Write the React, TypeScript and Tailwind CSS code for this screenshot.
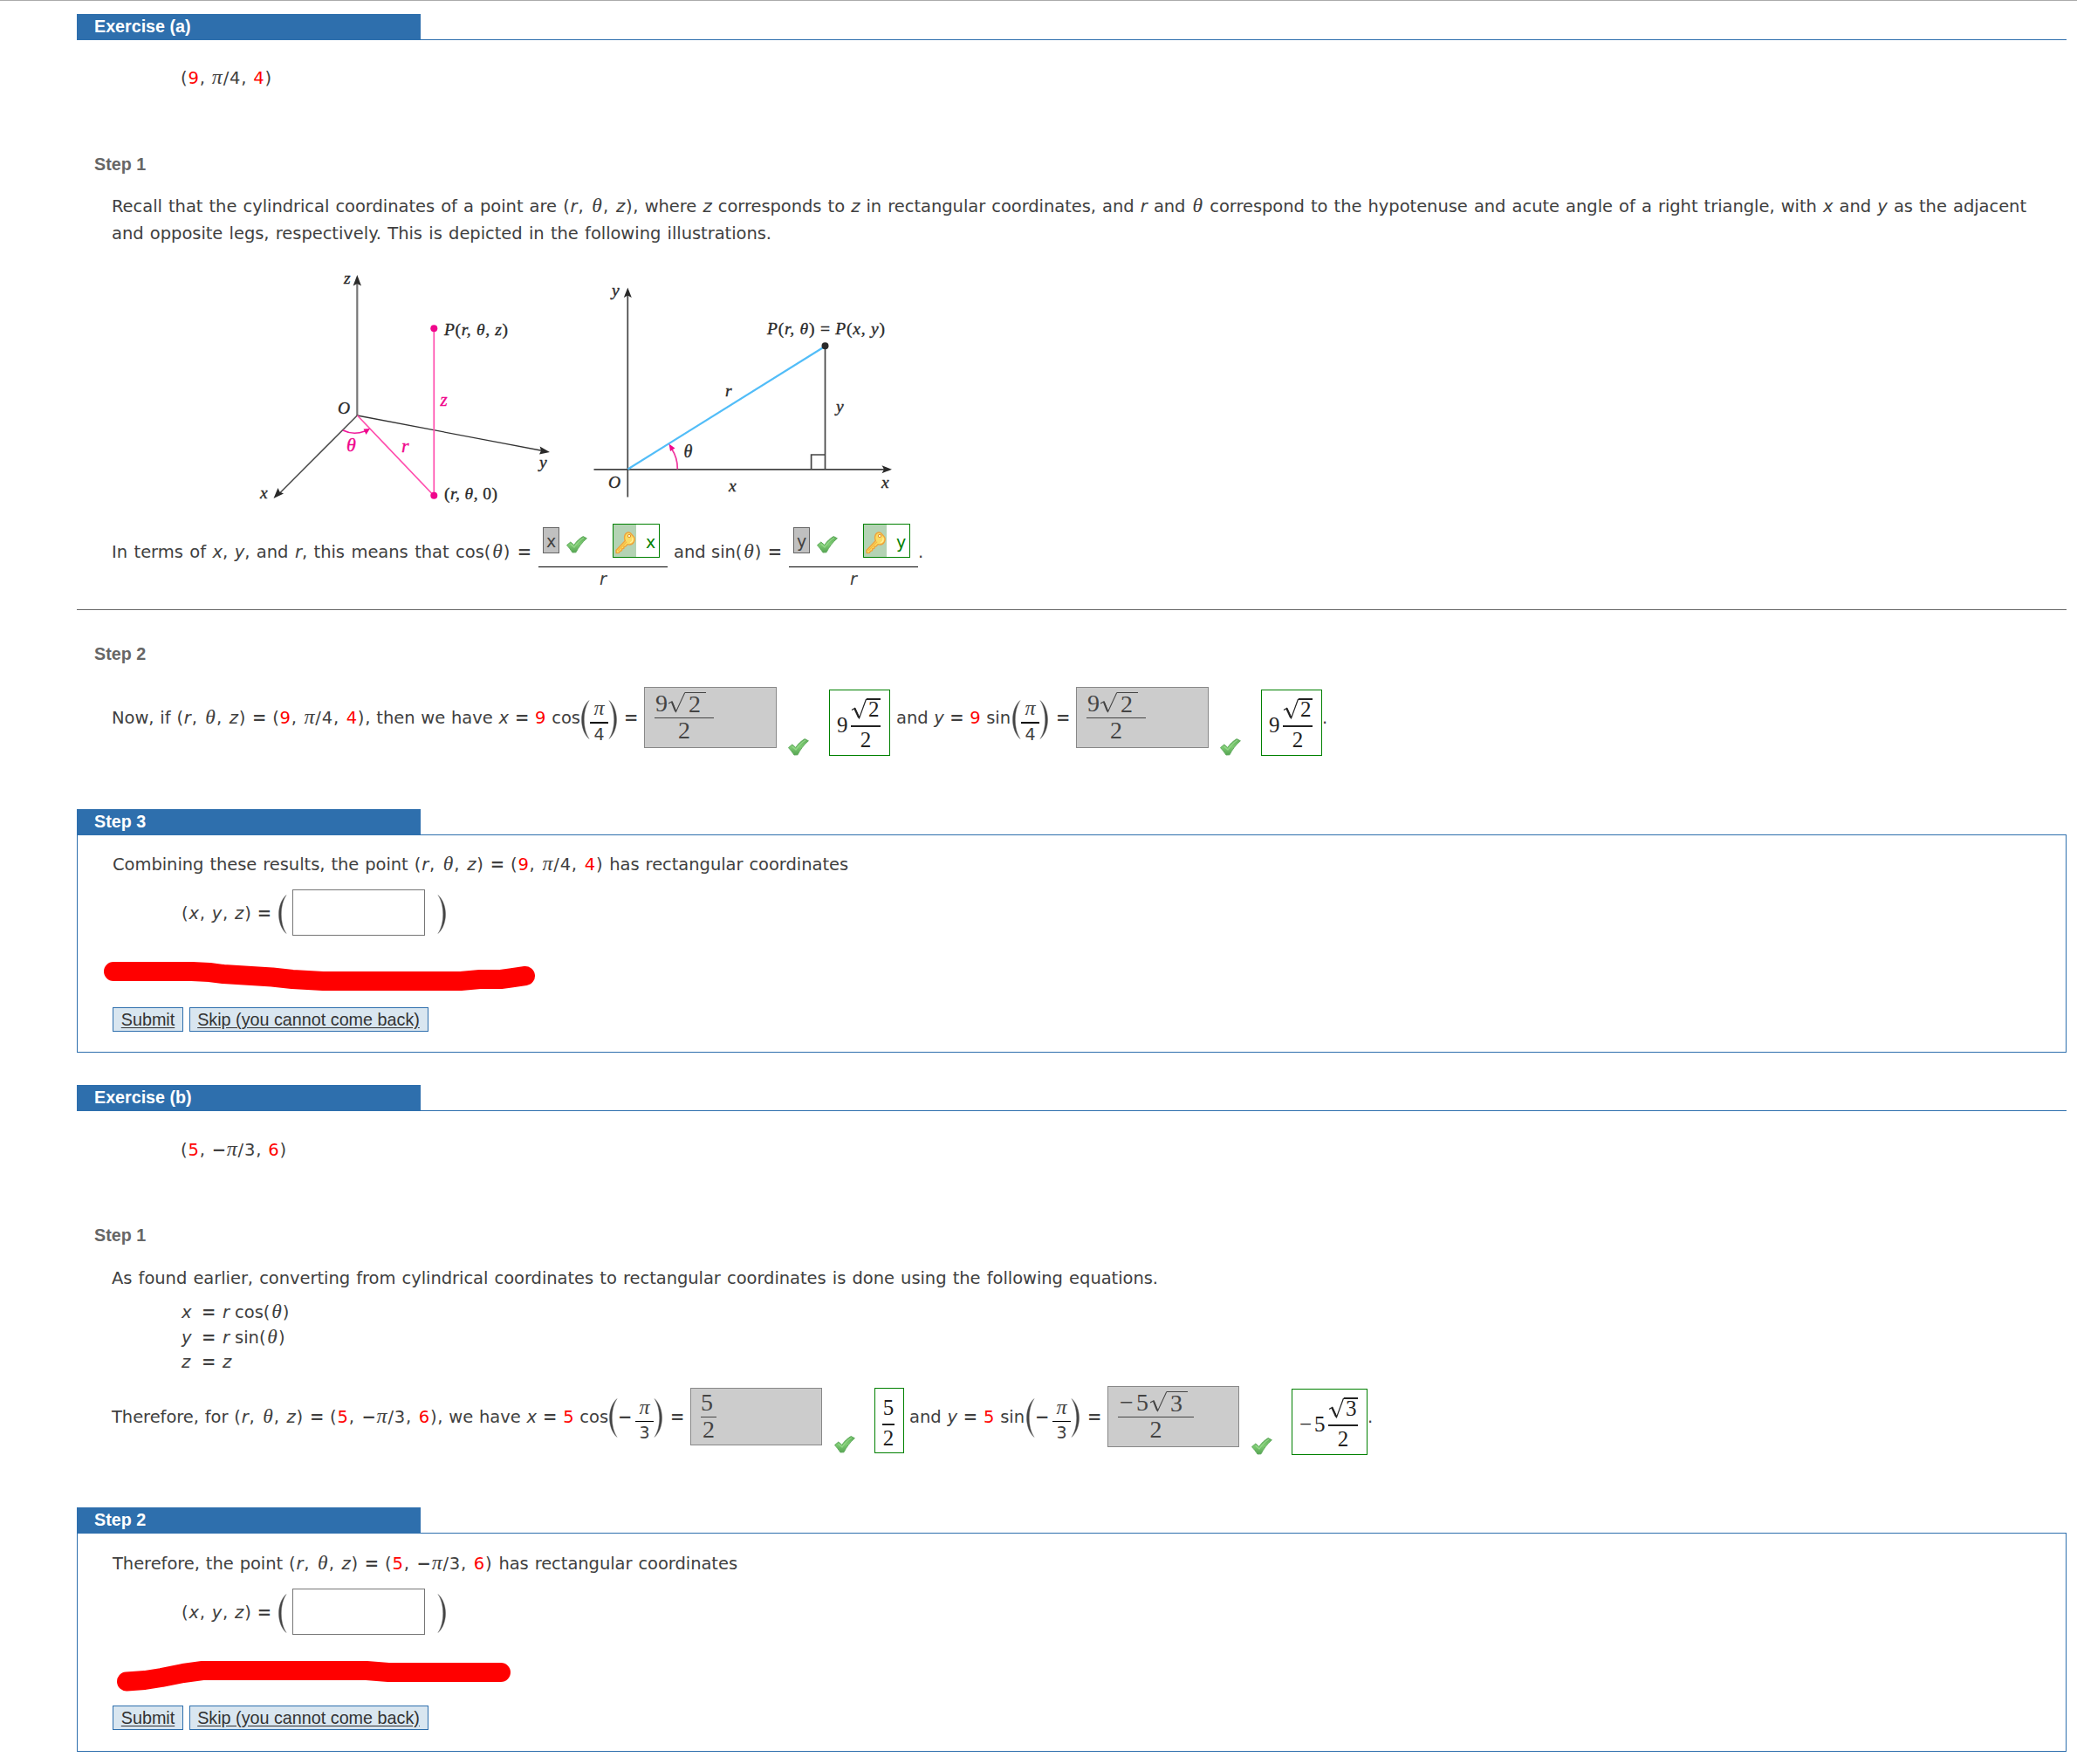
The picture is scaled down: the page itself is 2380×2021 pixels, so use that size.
import React from "react";

type Kids = { children?: React.ReactNode; className?: string };

const Red = ({ children }: Kids) => <span className="text-[#ff0000]">{children}</span>;
const I = ({ children }: Kids) => <i>{children}</i>;
const Eq = () => <b>=</b>;
const Minus = () => <b>−</b>;
const Theta = () => (
  <span className="px-px font-['Liberation_Serif',serif] text-[23.5px] leading-none italic tracking-normal">θ</span>
);
const Pi = () => (
  <span className="font-['Liberation_Serif',serif] text-[24px] leading-none italic">π</span>
);
const Wide = ({ children }: Kids) => <span className="tracking-[0.8px]">{children}</span>;
const Cylindrical = () => (
  <Wide>
    (<I>r</I>, <Theta />, <I>z</I>)
  </Wide>
);
const PointA = () => (
  <Wide>
    (<Red>9</Red>, <Pi />/4, <Red>4</Red>)
  </Wide>
);
const PointB = () => (
  <Wide>
    (<Red>5</Red>, <Minus /><Pi />/3, <Red>6</Red>)
  </Wide>
);

/** One run of body text stretched to an exact measure. */
const Run = ({ children, className = "" }: Kids) => (
  <div className={`h-[30px] shrink-0 whitespace-nowrap leading-[32px] [text-align-last:justify] ${className}`}>
    {children}
  </div>
);

const Header = ({ children, className = "" }: Kids) => (
  <div className={`flex h-[30px] w-[2280px] ${className}`}>
    <h2 className="w-[394px] bg-[#2e6fad] pl-5 font-['Liberation_Sans',Arial,sans-serif] text-[19.7px] font-bold leading-[29px] tracking-normal text-white">
      {children}
    </h2>
    <div className="grow border-b border-[#2e6fad]" />
  </div>
);

const StepTitle = ({ children, className = "" }: Kids) => (
  <h3 className={`h-[30px] pl-5 font-['Liberation_Sans',Arial,sans-serif] text-[19.7px] font-bold leading-[30px] tracking-normal text-[#666] ${className}`}>
    {children}
  </h3>
);

const Check = ({ className = "" }: Kids) => (
  <svg className={`h-5 w-6 shrink-0 ${className}`} viewBox="0 0 24 20">
    <defs>
      <linearGradient id="tick" x1="0" y1="0" x2="0" y2="1">
        <stop offset="0" stopColor="#5fae5a" />
        <stop offset="0.5" stopColor="#7ecb73" />
        <stop offset="1" stopColor="#56a552" />
      </linearGradient>
    </defs>
    <path d="M.5 10.6 4.8 7 8.800 10.400C11.600 6.200 15 3 19.200.6L23.400 2.800C18 7.400 14 12.800 11 18.800L7 19C5 16 3 13.400.5 10.600Z" fill="url(#tick)" stroke="#58a556" strokeWidth=".9" strokeLinejoin="round" />
    <path d="M4.700 9.200 9 13C12 8.600 15.600 4.800 20 2" fill="none" stroke="#9bdc90" strokeWidth="1.300" opacity=".8" />
  </svg>
);

const KeyIcon = () => (
  <svg className="h-[26px] w-6" viewBox="0 0 24 26">
    <path
      d="M12.3 3.6C13.5 1 16.4.4 18.4 1.8L21.8 5.4C23.4 7.2 23.4 10 22.2 12.2 20.6 14.8 17.6 15.4 15.2 14.6L12.8 17 11 17.2 10.8 19.4 8.8 19.8 8.4 21.8 6.6 22.4 5.2 24.4 2.2 24.6 2 21.4 12.4 10.6C11.4 8.4 11.4 5.6 12.3 3.6Z"
      fill="#fbdc62"
      stroke="#efa33a"
      strokeWidth="1.4"
      strokeLinejoin="round"
    />
    <circle cx="17" cy="5" r="1.7" fill="#fff3d0" stroke="#d9882a" strokeWidth=".9" />
    <path d="M4 22 14.2 11.6" stroke="#f3b73e" strokeWidth="1.2" />
    <path d="M20.8 7.4C21.4 9.6 20.4 12 18 12.8" fill="none" stroke="#fff0a0" strokeWidth="1.2" />
  </svg>
);

const AnswerOver = ({ v, className = "" }: { v: string; className?: string }) => (
  <div className={`flex w-[148px] shrink-0 flex-col ${className}`}>
    <div className="flex h-[50px] items-start border-b-[1.5px] border-black">
      <span className="ml-[5px] mt-1 h-[30px] w-[19px] border border-[#666] bg-[#c0c0c0] text-center text-[19px] leading-[31px]">{v}</span>
      <Check className="ml-2 mt-[14px]" />
      <span className="ml-[29px] flex h-[39px] w-[54px] border-[1.5px] border-[#008000]">
        <span className="flex w-[26px] items-center justify-center bg-[#b4d3b4] pt-1">
          <KeyIcon />
        </span>
        <span className="h-9 flex-1 pl-[7px] text-center text-[19px] leading-[40px] text-[#008000]">{v}</span>
      </span>
    </div>
    <span className="h-[30px] text-center italic leading-[28px]">r</span>
  </div>
);

const Paren = ({ right = false, className = "" }: { right?: boolean; className?: string }) => (
  <svg className={`h-[45px] w-[11px] shrink-0 ${className}`} viewBox="0 0 11 45">
    <path
      d={right ? "M1 .5C12.4 11 12.4 34 1 44.5 8.6 33 8.6 12 1 .5Z" : "M10 .5C-1.4 11-1.4 34 10 44.5 2.4 33 2.4 12 10 .5Z"}
      fill="#444"
      stroke="#666"
      strokeWidth=".4"
    />
  </svg>
);

const SmallFrac = ({ d, className = "" }: { d: string; className?: string }) => (
  <div className={`flex w-[21px] shrink-0 flex-col items-center ${className}`}>
    <span className="flex h-[22px] items-center leading-[22px]">
      <Pi />
    </span>
    <span className="mt-[5px] h-[1.5px] w-full bg-black" />
    <span className="h-6 text-[19px] leading-6">{d}</span>
  </div>
);

/** Typeset root used in the grey entry boxes (28px) and the answer boxes (25px). */
const Root = ({ n, small = false }: { n: string; small?: boolean }) =>
  small ? (
    <span className="flex h-[25px]">
      <svg className="h-[25px] w-[18px]" viewBox="0 0 18 25">
        <path d="M1 13.6 4.6 11.4 9.6 22.6 17.6.8" fill="none" stroke="#222" strokeWidth="1.2" />
        <path d="M4.4 11.8 9.2 22.2" stroke="#222" strokeWidth="2.2" />
      </svg>
      <span className="w-4 border-t-2 border-[#222] pl-[2px] leading-[22px]">{n}</span>
    </span>
  ) : (
    <span className="flex h-7">
      <svg className="h-7 w-[19px]" viewBox="0 0 19 28">
        <path d="M0 14 4 11.8 8.6 23.4 18.8 1.5" fill="none" stroke="#444" strokeWidth="1.1" />
        <path d="M3.8 12.2 8.2 23" stroke="#444" strokeWidth="2" />
      </svg>
      <span className="mt-px h-[27px] w-6 border-t border-[#444] pl-1 leading-[26px]">{n}</span>
    </span>
  );

const Entry = ({ num, den, className = "", frac }: { num: React.ReactNode; den: string; className?: string; frac: string }) => (
  <div className={`shrink-0 border border-[#888] bg-[#ccc] pl-[11px] pt-1 font-['Liberation_Serif',serif] text-[28px] text-[#444] ${className}`}>
    <div className={`flex flex-col ${frac}`}>
      <span className="flex h-7 leading-7">{num}</span>
      <span className="mt-0.5 h-px bg-[#444]" />
      <span className="h-7 text-center leading-7">{den}</span>
    </div>
  </div>
);

const Key = ({ lead, num, den, className = "", frac }: { lead?: React.ReactNode; num: React.ReactNode; den: string; className?: string; frac: string }) => (
  <div className={`flex shrink-0 border-[1.5px] border-[#008000] bg-white font-['Liberation_Serif',serif] text-[25px] text-[#222] ${className}`}>
    {lead && <span className="mt-[27px] flex h-[25px] leading-[25px]">{lead}</span>}
    <div className={`mt-[9px] flex flex-col ${frac}`}>
      <span className="flex h-[25px] leading-[25px]">{num}</span>
      <span className="mt-1.5 h-0.5 bg-[#222]" />
      <span className="mt-0.5 h-[25px] text-center leading-[25px]">{den}</span>
    </div>
  </div>
);

const CoordRow = ({ className = "" }: Kids) => (
  <div className={`flex h-[57px] items-start pl-[119px] ${className}`}>
    <Run className="mt-[14px] w-[101px]">
      <Wide>(<I>x</I>, <I>y</I>, <I>z</I>)</Wide> <Eq />
    </Run>
    <Paren className="ml-[9px] mt-2" />
    <input className="ml-[6px] mt-0.5 h-[53px] w-[152px] border border-[#767676] bg-white" />
    <Paren right className="ml-[14px] mt-2" />
  </div>
);

const Buttons = ({ className = "" }: Kids) => (
  <div className={`flex gap-[7px] pl-10 font-['Liberation_Sans',Arial,sans-serif] text-[19.75px] leading-[26px] tracking-normal text-[#333] ${className}`}>
    <button className="h-7 w-[81px] border border-[#2e6fad] bg-[#d9e6f0] pb-px underline underline-offset-2">Submit</button>
    <button className="h-7 w-[274px] border border-[#2e6fad] bg-[#d9e6f0] pb-px pr-px underline underline-offset-2">Skip (you cannot come back)</button>
  </div>
);

const Figures = () => (
  <svg className="ml-[192px] mt-[18px] h-[290px] w-[780px] font-['Liberation_Serif',serif] italic [&_text]:stroke-current [&_text]:[stroke-width:0.35]" viewBox="0 0 780 290" fontSize="19.5" fill="currentColor" color="#2a2a2a">
    <g fill="none" stroke="#666" strokeWidth="1.7">
      <path d="M129.3 24V176" strokeWidth="2.2" stroke="#777" />
      <path d="M129.3 176 40 265.500" stroke="#555" />
      <path d="M129.300 176 342 216.500" strokeWidth="1.300" stroke="#333" />
    </g>
    <path d="M129.300 15 134 27.500 129.300 25 124.600 27.500ZM33.500 271 38.500 259 40.500 263.500 45 265.500ZM350 218 338 220.500 340 216.300 338.600 211.500Z" />
    <g stroke="#ff4fae" strokeWidth="1.700" fill="none">
      <path d="M129.500 176 217.300 268M217.300 77V268" />
      <path d="M113 193C121 197 130 197 138 194" stroke="#f0189a" />
    </g>
    <g color="#f0068c" fill="currentColor">
      <path d="M144 191 136.500 191.500 139.500 198Z" />
      <circle cx="217.300" cy="76.300" r="4" />
      <circle cx="217.300" cy="267.800" r="4" />
      <text x="224.500" y="164.500" fontSize="21">z</text>
      <text x="117" y="216.500" fontSize="22">θ</text>
      <text x="180" y="217.500" fontSize="22">r</text>
    </g>
    <text x="114" y="25">z</text>
    <text x="107" y="173.500">O</text>
    <text x="18" y="271">x</text>
    <text x="338" y="236">y</text>
    <text x="229" y="83.500" textLength="73">
      P<tspan fontStyle="normal">(</tspan>r, θ, z<tspan fontStyle="normal">)</tspan>
    </text>
    <text x="229" y="271.500" textLength="61">
      <tspan fontStyle="normal">(</tspan>r, θ, <tspan fontStyle="normal">0)</tspan>
    </text>

    <g fill="none" stroke="#444" strokeWidth="1.700">
      <path d="M439.300 38V269.500M400.500 237.800H736M665.500 98V238M649.600 238V221H665.500" />
    </g>
    <path d="M439.300 29.500 443.800 41 439.300 38.500 434.800 41ZM742 237.800 730.500 242.300 733 237.800 730.500 233.300Z" />
    <path d="M439.500 237.500 665 97" stroke="#52bdf8" strokeWidth="2.100" />
    <path d="M496.300 237.500C496.500 228 493.500 220 489.500 214" stroke="#f0389f" strokeWidth="1.700" fill="none" />
    <path d="M486.500 208.500 493.500 213.500 488 217Z" fill="#f0068c" />
    <circle cx="665.500" cy="96.300" r="4" />
    <text x="421" y="38.500">y</text>
    <text x="417" y="258.500">O</text>
    <text x="555" y="263">x</text>
    <text x="730" y="258.500">x</text>
    <text x="551" y="154">r</text>
    <text x="678" y="171.500">y</text>
    <text x="503.500" y="223.500" fontSize="20">θ</text>
    <text x="599" y="82.500" textLength="135">
      P<tspan fontStyle="normal">(</tspan>r, θ<tspan fontStyle="normal">) = </tspan>P<tspan fontStyle="normal">(</tspan>x, y<tspan fontStyle="normal">)</tspan>
    </text>
  </svg>
);

export default function App() {
  return (
    <main className="h-[2021px] w-[2380px] overflow-hidden border-t border-[#aaa] bg-white font-['DejaVu_Sans',Verdana,sans-serif] text-[19.5px] tracking-[-0.05px] text-[#404040]">
      <div className="ml-[88px] w-[2280px]">
        <Header className="mt-[15px]">Exercise (a)</Header>
        <Run className="ml-[119px] mt-7 w-[105px]">
          <PointA />
        </Run>

        <StepTitle className="mt-[69px]">Step 1</StepTitle>
        <Run className="ml-10 mt-[18px] w-[2194px]">
          Recall that the cylindrical coordinates of a point are <Cylindrical />, where <I>z</I> corresponds to <I>z</I> in rectangular coordinates, and <I>r</I> and <Theta /> correspond to the hypotenuse and acute angle of a right triangle, with <I>x</I> and <I>y</I> as the adjacent
        </Run>
        <Run className="ml-10 mt-px w-[756px]">and opposite legs, respectively. This is depicted in the following illustrations.</Run>
        <Figures />

        <div className="mt-[10px] flex h-20 items-start pl-10">
          <Run className="mt-[17px] w-[481px]">
            In terms of <I>x</I>, <I>y</I>, and <I>r</I>, this means that cos<Wide>(<Theta />)</Wide> <Eq />
          </Run>
          <AnswerOver v="x" className="ml-2" />
          <Run className="ml-[7px] mt-[17px] w-[124px]">
            and sin<Wide>(<Theta />)</Wide> <Eq />
          </Run>
          <AnswerOver v="y" className="ml-2" />
          <span className="mt-[17px] leading-[32px]">.</span>
        </div>

        <hr className="mt-[18px] border-t border-[#666]" />

        <StepTitle className="mt-[35px]">Step 2</StepTitle>
        <div className="mt-5 flex h-[85px] items-start pl-10">
          <Run className="mt-[23px] w-[537px]">
            Now, if <Cylindrical /> <Eq /> <PointA />, then we have <I>x</I> <Eq /> <Red>9</Red> cos
          </Run>
          <Paren className="mt-[18px]" />
          <SmallFrac d="4" className="mt-4" />
          <Paren right className="mt-[18px]" />
          <Run className="ml-[7px] mt-[23px] w-[14px]"><Eq /></Run>
          <Entry className="ml-[9px] mt-[3px] h-[70px] w-[152px]" frac="w-[68px]" num={<><span className="w-4 pl-px">9</span><Root n="2" /></>} den="2" />
          <Check className="ml-[13px] mt-[62px]" />
          <Key className="ml-[23px] mt-[6px] h-[76px] w-[70px] pl-2" lead={<span className="w-4">9</span>} frac="w-[34px]" num={<Root small n="2" />} den="2" />
          <Run className="ml-[7px] mt-[23px] w-[131px]">
            and <I>y</I> <Eq /> <Red>9</Red> sin
          </Run>
          <Paren className="ml-px mt-[18px]" />
          <SmallFrac d="4" className="mt-4" />
          <Paren right className="mt-[18px]" />
          <Run className="ml-[8px] mt-[23px] w-[14px]"><Eq /></Run>
          <Entry className="ml-[9px] mt-[3px] h-[70px] w-[152px]" frac="w-[68px]" num={<><span className="w-4 pl-px">9</span><Root n="2" /></>} den="2" />
          <Check className="ml-[13px] mt-[62px]" />
          <Key className="ml-[23px] mt-[6px] h-[76px] w-[70px] pl-2" lead={<span className="w-4">9</span>} frac="w-[34px]" num={<Root small n="2" />} den="2" />
          <span className="mt-[23px] leading-[32px]">.</span>
        </div>

        <Header className="mt-[58px]">Step 3</Header>
        <section className="flow-root h-[249px] border-x border-b border-[#2e6fad]">
          <Run className="ml-10 mt-[18px] w-[843px]">
            Combining these results, the point <Cylindrical /> <Eq /> <PointA /> has rectangular coordinates
          </Run>
          <CoordRow className="mt-3" />
          <svg className="ml-[21px] mt-[25px] h-10 w-[520px]" viewBox="0 0 520 40">
            <path d="M20 14H110L130 15 146 17 170 18.500 202 20.500 225 23 260 25H418L440 23H464L475 21.500 492 19" fill="none" stroke="#f00" strokeWidth="22" strokeLinecap="round" strokeLinejoin="round" />
          </svg>
          <Buttons className="mt-[15px]" />
        </section>

        <Header className="mt-[37px]">Exercise (b)</Header>
        <Run className="ml-[119px] mt-[29px] w-[121px]">
          <PointB />
        </Run>

        <StepTitle className="mt-[68px]">Step 1</StepTitle>
        <Run className="ml-10 mt-[19px] w-[1199px]">
          As found earlier, converting from cylindrical coordinates to rectangular coordinates is done using the following equations.
        </Run>
        <div className="ml-[120px] mt-[11px] grid grid-cols-[23px_24px_auto] leading-[28.5px]">
          <I>x</I><Eq /><span className="h-[28.5px]"><I>r</I> cos<Wide>(<Theta />)</Wide></span>
          <I>y</I><Eq /><span className="h-[28.5px]"><I>r</I> sin<Wide>(<Theta />)</Wide></span>
          <I>z</I><Eq /><span className="h-[28.5px]"><I>z</I></span>
        </div>

        <div className="mt-[9px] flex h-[85px] items-start pl-10">
          <Run className="mt-[23px] w-[569px]">
            Therefore, for <Cylindrical /> <Eq /> <PointB />, we have <I>x</I> <Eq /> <Red>5</Red> cos
          </Run>
          <Paren className="mt-[17px]" />
          <Run className="mt-[23px] w-[20px] [text-align-last:left]"><Minus /></Run>
          <SmallFrac d="3" className="mt-4" />
          <Paren right className="mt-[17px]" />
          <Run className="ml-[8px] mt-[23px] w-[14px]"><Eq /></Run>
          <Entry className="ml-[9px] mt-[5px] h-[66px] w-[151px] !pt-[2px]" frac="w-[18px]" num={<span>5</span>} den="2" />
          <Check className="ml-[14px] mt-[60px]" />
          <Key className="ml-[22px] mt-[5px] h-[75px] w-[34px] pl-2" frac="w-[14px]" num={<span className="w-full text-center">5</span>} den="2" />
          <Run className="ml-[6px] mt-[23px] w-[132px]">
            and <I>y</I> <Eq /> <Red>5</Red> sin
          </Run>
          <Paren className="ml-px mt-[17px]" />
          <Run className="mt-[23px] w-[20px] [text-align-last:left]"><Minus /></Run>
          <SmallFrac d="3" className="mt-4" />
          <Paren right className="mt-[17px]" />
          <Run className="ml-[8px] mt-[23px] w-[14px]"><Eq /></Run>
          <Entry className="ml-[9px] mt-[3px] h-[70px] w-[151px]" frac="w-[87px]" num={<><span className="w-[21px] pl-0.5">−</span><span className="w-4">5</span><Root n="3" /></>} den="2" />
          <Check className="ml-[14px] mt-[62px]" />
          <Key className="ml-[22px] mt-[6px] h-[76px] w-[87px] pl-2" lead={<><span className="w-[17px]">−</span><span className="w-4">5</span></>} frac="w-[34px]" num={<Root small n="3" />} den="2" />
          <span className="mt-[23px] leading-[32px]">.</span>
        </div>

        <Header className="mt-[57px]">Step 2</Header>
        <section className="flow-root h-[250px] border-x border-b border-[#2e6fad]">
          <Run className="ml-10 mt-[19px] w-[716px]">
            Therefore, the point <Cylindrical /> <Eq /> <PointB /> has rectangular coordinates
          </Run>
          <CoordRow className="mt-3" />
          <svg className="ml-[21px] mt-[25px] h-10 w-[520px]" viewBox="0 0 520 40">
            <path d="M35 26.500 56 25 75 22 100 17 122 14H310L335 16H464" fill="none" stroke="#f00" strokeWidth="22" strokeLinecap="round" strokeLinejoin="round" />
          </svg>
          <Buttons className="mt-[14px]" />
        </section>
      </div>
    </main>
  );
}
